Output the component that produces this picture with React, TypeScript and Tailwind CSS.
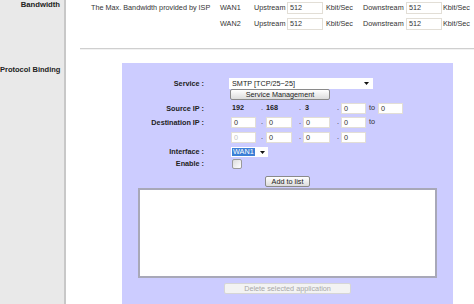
import React from "react";

const Box = ({ w, v, muted }: { w: string; v: string; muted?: boolean }) => (
  <div
    className={`${w} h-full bg-white border border-[#e2ded6] pl-[2px] flex items-center leading-none ${
      muted ? "text-[#c4c4c4]" : "text-[#333]"
    }`}
  >
    {v}
  </div>
);

const Btn = ({ w, label, disabled }: { w: string; label: string; disabled?: boolean }) => (
  <div
    className={`${w} h-[11px] flex items-center justify-center leading-none rounded-[2px] border ${
      disabled
        ? "border-[#d6d6d6] bg-[#f3f3f3] text-[#a8a8a8]"
        : "border-[#8a8a8a] bg-gradient-to-b from-white to-[#dcdcdc] text-[#222]"
    }`}
  >
    {label}
  </div>
);

const Label = ({ t }: { t: string }) => (
  <div className="w-[82px] text-right font-bold text-[#222] leading-none">{t}</div>
);

const IpRow = ({
  cells,
  to,
}: {
  cells: React.ReactNode[];
  to?: React.ReactNode;
}) => (
  <div className="flex items-center h-full ml-[2px]">
    <div className="w-[30px] h-full flex items-center">{cells[0]}</div>
    <div className="w-[5px]">.</div>
    <div className="w-[33px] h-full flex items-center">{cells[1]}</div>
    <div className="w-[4px]">.</div>
    <div className="w-[34px] h-full flex items-center">{cells[2]}</div>
    <div className="w-[4px]">.</div>
    <div className="w-[28px] h-full flex items-center">{cells[3]}</div>
    {to}
  </div>
);

export default function App() {
  return (
    <div className="w-[474px] h-[304px] overflow-hidden bg-white grid grid-cols-[66px_1fr] grid-rows-[50px_1fr] font-['Liberation_Sans',Arial,sans-serif] text-[7.25px] text-[#333]">
      {/* left cells */}
      <div className="bg-[#e9e9e9] border-r-2 border-[#c8c8c8] text-right pr-[4px] font-bold text-[7.7px] leading-[9px] text-[#222]">
        Bandwidth
      </div>
      {/* bandwidth content */}
      <div className="flex flex-col">
        <div className="h-[48px] pl-[25px] pt-[2px] flex flex-col gap-[4px]">
          {["WAN1", "WAN2"].map((wan, i) => (
            <div key={wan} className="flex items-center h-[12px] leading-none">
              <div className="w-[119px] mr-[10px] [text-align-last:justify] whitespace-nowrap">
                {i === 0 ? "The Max. Bandwidth provided by ISP" : ""}
              </div>
              <div className="w-[34px]">{wan}</div>
              <div className="w-[33px]">Upstream</div>
              <Box w="w-[36px]" v="512" />
              <div className="w-[3px]" />
              <div className="w-[37px]">Kbit/Sec</div>
              <div className="w-[43px]">Downstream</div>
              <Box w="w-[36px]" v="512" />
              <div className="ml-[1px]">Kbit/Sec</div>
            </div>
          ))}
        </div>
        <div className="ml-[14px] h-px bg-[#cfcfcf]" />
        <div className="ml-[14px] h-px bg-[#f2f2f2]" />
      </div>

      <div className="bg-[#e9e9e9] border-r-2 border-[#c8c8c8] text-right pr-[4px] pt-[15px] font-bold text-[7.5px] leading-[9px] text-[#222] whitespace-nowrap">
        Protocol Binding
      </div>
      {/* protocol binding content */}
      <div className="flex flex-col min-h-0">
        <div className="ml-[56px] mt-[13px] w-[331px] flex-1 bg-[#ccccff] flex flex-col">
          {/* Service */}
          <div className="mt-[15px] h-[11px] flex items-center">
            <Label t="Service :" />
            <div className="ml-[25px] w-[144px] h-full bg-white flex items-center justify-between pl-[3px] pr-[4px] leading-none text-[#222]">
              <span>SMTP [TCP/25~25]</span>
              <svg width="5" height="3" viewBox="0 0 5 3">
                <path d="M0 0h5L2.5 3z" fill="#111" />
              </svg>
            </div>
          </div>
          <div className="h-[11px] pl-[108px]">
            <Btn w="w-[100px]" label="Service Management" />
          </div>
          {/* Source IP */}
          <div className="mt-[3px] h-[11px] flex items-center">
            <Label t="Source IP :" />
            <div className="ml-[25px] h-full">
              <IpRow
                cells={[
                  <span className="font-bold text-[#222] pl-[1px]">192</span>,
                  <span className="font-bold text-[#222]">168</span>,
                  <span className="font-bold text-[#222] pl-[2px]">3</span>,
                  <Box w="w-[25px]" v="0" />,
                ]}
                to={
                  <>
                    <div className="w-[9px]">to</div>
                    <Box w="w-[25px]" v="0" />
                  </>
                }
              />
            </div>
          </div>
          {/* Destination IP */}
          <div className="mt-[3px] h-[11px] flex items-center">
            <Label t="Destination IP :" />
            <div className="ml-[25px] h-full">
              <IpRow
                cells={[
                  <Box w="w-[25px]" v="0" />,
                  <Box w="w-[26px]" v="0" />,
                  <Box w="w-[27px]" v="0" />,
                  <Box w="w-[25px]" v="0" />,
                ]}
                to={<div className="w-[9px]">to</div>}
              />
            </div>
          </div>
          <div className="mt-[4px] h-[11px] flex items-center">
            <div className="w-[82px]" />
            <div className="ml-[25px] h-full">
              <IpRow
                cells={[
                  <Box w="w-[25px]" v="0" muted />,
                  <Box w="w-[26px]" v="0" />,
                  <Box w="w-[27px]" v="0" />,
                  <Box w="w-[25px]" v="0" />,
                ]}
              />
            </div>
          </div>
          {/* Interface */}
          <div className="mt-[4px] h-[10px] flex items-center">
            <Label t="Interface :" />
            <div className="ml-[27px] w-[37px] h-full bg-white flex items-center pl-[1px] pr-[3px] justify-between leading-none">
              <span className="bg-[#3d7fd6] text-white px-[1px] h-[8px] flex items-center">WAN1</span>
              <svg width="5" height="3" viewBox="0 0 5 3">
                <path d="M0 0h5L2.5 3z" fill="#111" />
              </svg>
            </div>
          </div>
          {/* Enable */}
          <div className="mt-[2px] h-[10px] flex items-center">
            <Label t="Enable :" />
            <div className="ml-[28px] w-[10px] h-[10px] rounded-[2px] border border-[#9a9a9a] bg-gradient-to-br from-[#dcdcdc] to-white" />
          </div>
          {/* Add to list */}
          <div className="mt-[7px] flex justify-center">
            <Btn w="w-[45px]" label="Add to list" />
          </div>
          <div className="mt-[1px] mx-auto w-[299px] h-[90px] bg-white border-2 border-[#a8a8b8]" />
          <div className="mt-[5px] flex justify-center">
            <Btn w="w-[127px]" label="Delete selected application" disabled />
          </div>
        </div>
      </div>
    </div>
  );
}
